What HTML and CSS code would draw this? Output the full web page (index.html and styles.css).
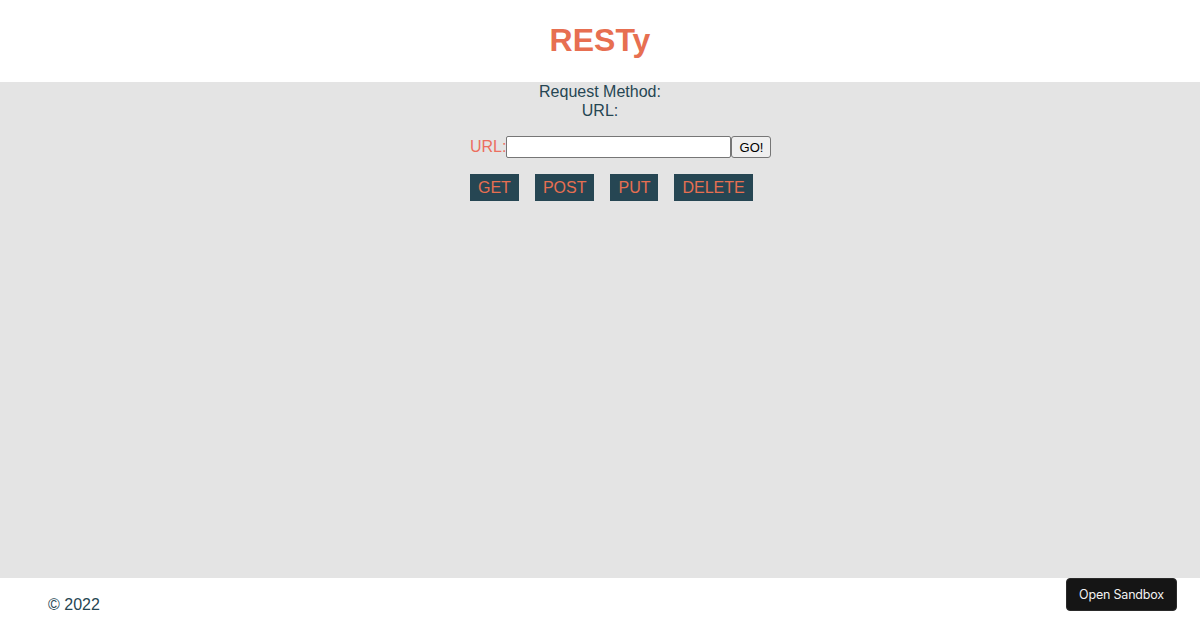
FILE: index.html
```html
<!DOCTYPE html>
<html>
<head>
<meta charset="utf-8">
<link rel="stylesheet" href="styles.css">
</head>
<body>
<div class="app">
  <header class="header"><h1 class="title">RESTy</h1></header>
  <main class="main">
    <div class="info">
      <div>Request Method:</div>
      <div>URL:</div>
    </div>
    <div class="panel">
      <form class="form-row">
        <label class="label">URL:</label><input class="url-input" type="text"><button class="go" type="button">GO!</button>
      </form>
      <div class="methods">
        <span class="method">GET</span>
        <span class="method">POST</span>
        <span class="method">PUT</span>
        <span class="method">DELETE</span>
      </div>
    </div>
  </main>
  <footer class="footer">© 2022</footer>
  <button class="sandbox" type="button">Open Sandbox</button>
</div>
</body>
</html>
```
FILE: styles.css
```css
html, body { margin: 0; padding: 0; }
body {
  font-family: "Liberation Sans", Arial, sans-serif;
  font-size: 16px;
  color: #264653;
}
.app {
  display: flex;
  flex-direction: column;
  height: 630px;
  position: relative;
}
.header {
  height: 82px;
  display: flex;
  align-items: center;
  justify-content: center;
  background: #fff;
  padding-bottom: 2px;
  box-sizing: border-box;
}
.title {
  margin: 0;
  font-size: 32px;
  font-weight: bold;
  color: #e76f51;
  line-height: 37px;
}
.main {
  flex: 1;
  background: #e4e4e4;
  display: flex;
  flex-direction: column;
  align-items: center;
}
.info {
  text-align: center;
  line-height: 19px;
}
.panel {
  width: 260px;
  margin-top: 16px;
  white-space: nowrap;
}
.form-row {
  display: flex;
  align-items: center;
  margin: 0;
  height: 22px;
}
.label {
  color: #ec6f5f;
  line-height: 18px;
  flex-shrink: 0;
}
.url-input {
  box-sizing: border-box;
  flex-shrink: 0;
  width: 225px;
  height: 22px;
  margin: 0;
  border: 1px solid #767676;
  border-radius: 2px;
  background: #fff;
  padding: 1px 2px;
}
.go {
  box-sizing: border-box;
  flex-shrink: 0;
  width: 40px;
  height: 22px;
  margin: 0;
  padding: 0;
  font-family: "Liberation Sans", Arial, sans-serif;
  font-size: 13px;
  color: #000;
  background: #efefef;
  border: 1px solid #767676;
  border-radius: 3px;
}
.methods {
  display: flex;
  gap: 16px;
  margin-top: 16px;
}
.method {
  flex-shrink: 0;
  background: #264653;
  color: #e76f51;
  padding: 4px 8px;
  line-height: 19px;
}
.footer {
  height: 52px;
  background: #fff;
  display: flex;
  align-items: center;
  padding-left: 48px;
  padding-top: 2px;
  box-sizing: border-box;
}
.sandbox {
  position: absolute;
  left: 1066px;
  top: 578px;
  width: 111px;
  height: 33px;
  background: #151515;
  color: #f2f2f2;
  border: 1px solid #2a2a2a;
  border-radius: 4px;
  font-family: Inter, "Liberation Sans", sans-serif;
  font-size: 12.5px;
  letter-spacing: -0.2px;
  padding: 0;
}
```
